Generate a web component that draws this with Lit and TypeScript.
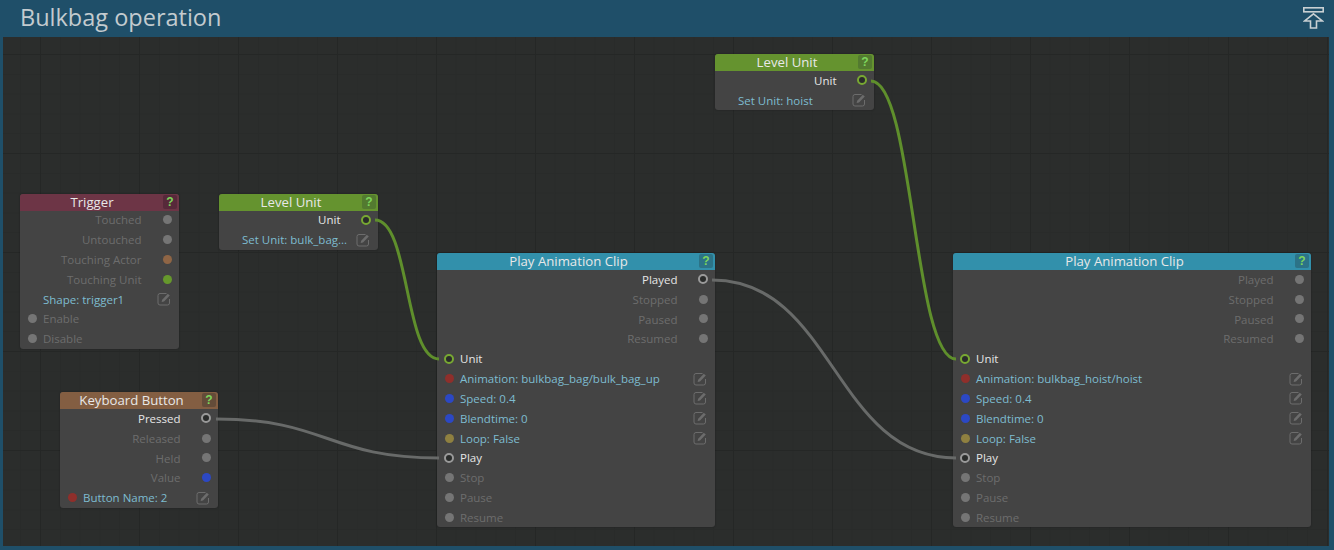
import { LitElement, html, css, svg } from "lit";
import { customElement } from "lit/decorators.js";

type Row = { side: "out" | "in" | "prop"; label: string; color?: string; on?: boolean; edit?: boolean };
type NodeDef = { title: string; x: number; y: number; w: number; head: string; help: string; rows: Row[] };

const GREY = "#757575";
const RED = "#8f2f2b";
const BLUE = "#2c48c4";
const GOLD = "#8f8040";
const GREEN = "#66982c";
const BROWN = "#8f6545";

const anim = (clip: string, played: boolean): Row[] => [
  { side: "out", label: "Played", color: GREY, on: played },
  { side: "out", label: "Stopped", color: GREY },
  { side: "out", label: "Paused", color: GREY },
  { side: "out", label: "Resumed", color: GREY },
  { side: "in", label: "Unit", color: GREEN, on: true },
  { side: "prop", label: `Animation: ${clip}`, color: RED, edit: true },
  { side: "prop", label: "Speed: 0.4", color: BLUE, edit: true },
  { side: "prop", label: "Blendtime: 0", color: BLUE, edit: true },
  { side: "prop", label: "Loop: False", color: GOLD, edit: true },
  { side: "in", label: "Play", color: GREY, on: true },
  { side: "in", label: "Stop", color: GREY },
  { side: "in", label: "Pause", color: GREY },
  { side: "in", label: "Resume", color: GREY },
];

const NODES: NodeDef[] = [
  {
    title: "Trigger", x: 17, y: 156.8, w: 159, head: "#6d3546", help: "#57293a",
    rows: [
      { side: "out", label: "Touched", color: GREY },
      { side: "out", label: "Untouched", color: GREY },
      { side: "out", label: "Touching Actor", color: BROWN },
      { side: "out", label: "Touching Unit", color: GREEN },
      { side: "prop", label: "Shape: trigger1", edit: true },
      { side: "in", label: "Enable", color: GREY },
      { side: "in", label: "Disable", color: GREY },
    ],
  },
  {
    title: "Level Unit", x: 216, y: 157, w: 159, head: "#65932f", help: "#537a30",
    rows: [
      { side: "out", label: "Unit", color: GREEN, on: true },
      { side: "prop", label: "Set Unit: bulk_bag...", edit: true },
    ],
  },
  {
    title: "Level Unit", x: 712, y: 17.4, w: 159, head: "#65932f", help: "#537a30",
    rows: [
      { side: "out", label: "Unit", color: GREEN, on: true },
      { side: "prop", label: "Set Unit: hoist", edit: true },
    ],
  },
  {
    title: "Keyboard Button", x: 57, y: 355.4, w: 158, head: "#835e42", help: "#644c39",
    rows: [
      { side: "out", label: "Pressed", color: GREY, on: true },
      { side: "out", label: "Released", color: GREY },
      { side: "out", label: "Held", color: GREY },
      { side: "out", label: "Value", color: BLUE },
      { side: "prop", label: "Button Name: 2", color: RED, edit: true },
    ],
  },
  { title: "Play Animation Clip", x: 434, y: 216.4, w: 278, head: "#3290ab", help: "#2c7387", rows: anim("bulkbag_bag/bulk_bag_up", true) },
  { title: "Play Animation Clip", x: 950, y: 216.4, w: 358, head: "#3290ab", help: "#2c7387", rows: anim("bulkbag_hoist/hoist", false) },
];

const WIRES = [
  { from: [367, 183], to: [441, 322], c: "#5f8f2c" },
  { from: [863, 44], to: [958, 322], c: "#5f8f2c" },
  { from: [208, 382], to: [441, 421], c: "#686a69" },
  { from: [704, 243], to: [958, 421], c: "#686a69" },
];

const editIcon = svg`<svg class="edit" viewBox="0 0 14 14" width="14" height="14" fill="none">
  <path d="M9.5 1.5H3A2 2 0 0 0 1 3.5V11A2 2 0 0 0 3 13H10.5A2 2 0 0 0 12.5 11V7" stroke="#6c6c6c" stroke-width="1"/>
  <path d="M4.6 10L5.2 7.8L10.8 1.8L12.8 3.6L7 9.5Z" fill="#6c6c6c"/>
</svg>`;

@customElement("app-root")
export class AppRoot extends LitElement {
  static styles = css`
    :host {
      display: flex;
      flex-direction: column;
      width: 1334px;
      height: 550px;
      background: #1f4f69;
      font-family: "Open Sans", "Noto Sans", sans-serif;
      overflow: hidden;
      box-sizing: border-box;
    }
    .bar {
      height: 37px;
      flex: none;
      display: flex;
      align-items: center;
      justify-content: space-between;
      padding: 0 10px 0 20px;
    }
    .title {
      font-size: 23.5px;
      color: #c3cbcf;
      line-height: 37px;
      position: relative;
      top: -1px;
    }
    .collapse { display: block; }
    .canvas {
      flex: 1;
      position: relative;
      margin: 0 5px 4px 3px;
      overflow: hidden;
      background-color: #2b2d2c;
      background-image:
        linear-gradient(to right, #252726 1px, transparent 1px),
        linear-gradient(to bottom, #252726 1px, transparent 1px),
        linear-gradient(to right, #292b2a 1px, transparent 1px),
        linear-gradient(to bottom, #292b2a 1px, transparent 1px);
      background-size: 99px 99px, 99px 99px, 19.8px 19.8px, 19.8px 19.8px;
      background-position: 37px 17px, 37px 17px, 37px 17px, 37px 17px;
    }
    .wires { position: absolute; inset: 0; z-index: 2; pointer-events: none; }
    .node {
      position: absolute;
      z-index: 1;
      background: #444444;
      border-radius: 3px;
      box-shadow: 0 0 2px rgba(0, 0, 0, 0.35);
      font-size: 11.5px;
      overflow: hidden;
    }
    .head {
      height: 17px;
      display: flex;
      align-items: center;
      position: relative;
      color: #e8e8e8;
      font-size: 13.2px;
      line-height: 17px;
      margin-bottom: -1px;
      padding-right: 15px;
    }
    .head span { flex: 1; text-align: center; }
    .help {
      position: absolute;
      right: 2px;
      top: 1px;
      width: 14px;
      height: 14px;
      border-radius: 2px;
      color: #7ed65c;
      font: bold 12px/14px "Liberation Sans", sans-serif;
      text-align: center;
    }
    .row {
      height: 19.85px;
      display: flex;
      align-items: center;
      position: relative;
      padding: 0 8px 0 23px;
      box-sizing: border-box;
      white-space: nowrap;
      color: #6d6d6d;
    }
    .row.out { justify-content: flex-end; padding: 0 37.5px 0 0; }
    .row.on { color: #e6e6e6; }
    .row.prop { color: #7ebcd0; justify-content: space-between; padding-right: 8px; }
    .dot {
      position: absolute;
      width: 9px;
      height: 9px;
      border-radius: 50%;
      top: 5.4px;
      box-sizing: border-box;
    }
    .out .dot { right: 7.5px; }
    .in .dot, .prop .dot { left: 7.5px; }
    .dot.ring {
      width: 10px;
      height: 10px;
      top: 5px;
      border: 2px solid;
      background: #2a2c2b;
    }
    .out .dot.ring { right: 7px; }
    .in .dot.ring { left: 7px; }
    .edit { flex: none; display: block; }
  `;

  private renderRow(r: Row) {
    const dot = r.color
      ? r.on
        ? html`<i class="dot ring" style="border-color:${r.color === GREY ? "#9a9a9a" : "#78a832"}"></i>`
        : html`<i class="dot" style="background:${r.color}"></i>`
      : "";
    return html`<div class="row ${r.side} ${r.on ? "on" : ""}">
      ${dot}<span>${r.label}</span>${r.edit ? editIcon : ""}
    </div>`;
  }

  render() {
    return html`
      <div class="bar">
        <div class="title">Bulkbag operation</div>
        <svg class="collapse" width="21" height="23" viewBox="0 0 21 23" fill="none" stroke="#c9d0d3" stroke-width="1.6">
          <rect x="0.8" y="0.8" width="19.4" height="4"/>
          <path d="M10.5 6.8L19.3 14H13.5V21H7.5V14H1.7Z"/>
        </svg>
      </div>
      <div class="canvas">
        ${NODES.map(
          (n) => html`<div class="node" style="left:${n.x}px;top:${n.y}px;width:${n.w}px">
            <div class="head" style="background:${n.head}">
              <span>${n.title}</span>
              <div class="help" style="background:${n.help}">?</div>
            </div>
            ${n.rows.map((r) => this.renderRow(r))}
          </div>`
        )}
        <svg class="wires" width="1326" height="509" fill="none">
          ${WIRES.map((w) => {
            const [x1, y1] = w.from;
            const [x2, y2] = w.to;
            const h = Math.max((x2 - x1) / 2, 40);
            return svg`<path d="M${x1 + 5} ${y1}C${x1 + h} ${y1} ${x2 - h} ${y2} ${x2 - 5} ${y2}" stroke=${w.c} stroke-width="3"/>`;
          })}
        </svg>
      </div>
    `;
  }
}
